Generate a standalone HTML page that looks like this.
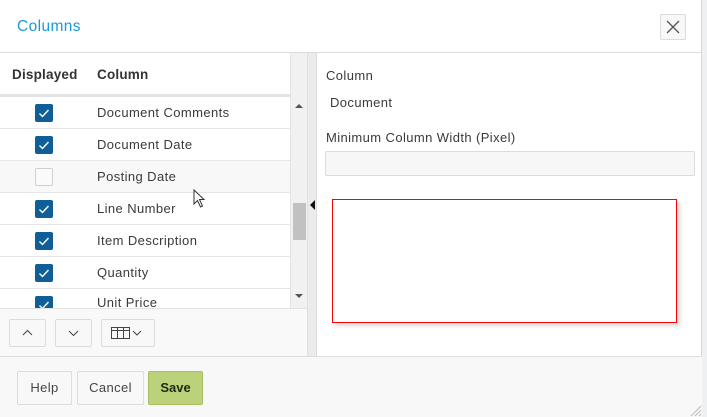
<!DOCTYPE html>
<html><head><style>
*{box-sizing:border-box;margin:0;padding:0}
body{width:707px;height:417px;overflow:hidden;background:#eef0f2;font-family:"Liberation Sans",sans-serif;font-size:13px;letter-spacing:0.4px;color:#3a3a3a;position:relative}
.dlg{position:absolute;left:0;top:0;width:702px;height:417px;background:#fff;border-right:1px solid #d8d8d8}
.hdr{position:absolute;left:0;top:0;width:702px;height:53px;border-bottom:1px solid #dcdcdc}
.title{position:absolute;left:17px;top:18px;font-size:15.5px;color:#1a9ad6}
.close{position:absolute;left:660px;top:14px;width:26px;height:26px;border:1px solid #dcdcdc;border-radius:2px;background:#f8f8f8}
.th{position:absolute;top:53px;left:0;width:290px;height:44px;border-bottom:3px solid #e4e4e4;font-weight:bold;font-size:13.5px;letter-spacing:0.2px;color:#333}
.row{position:absolute;left:0;width:290px;height:32px;border-bottom:1px solid #e6e6e6}
.cb{position:absolute;left:35px;top:7px;width:18px;height:18px;border-radius:2px;background:#0f5f96}
.cb.off{background:#fafafa;border:1px solid #cfcfcf}
.lbl{position:absolute;left:97px;top:8px;font-size:13px}
.sb{position:absolute;left:290px;top:53px;width:17px;height:255px;background:#f1f1f1;border-left:1px solid #e4e4e4}
.spl{position:absolute;left:307px;top:53px;width:10px;height:303px;background:#ebebeb;border-left:1px solid #e0e0e0;border-right:1px solid #dcdcdc}
.tb{position:absolute;left:0;top:308px;width:307px;height:48px;background:#f9f9f9;border-top:1px solid #e2e2e2}
.btn{position:absolute;border:1px solid #dcdcdc;border-radius:2px;background:#f8f8f8}
.ftr{position:absolute;left:0;top:356px;width:702px;height:61px;background:#f8f8f8;border-top:1px solid #dcdcdc}
</style></head><body>
<div class="dlg">
<div class="hdr"><div class="title">Columns</div>
<div class="close"><svg width="24" height="24"><path d="M6 6L18 18M18 6L6 18" stroke="#555" stroke-width="1.3"/></svg></div></div>
<div class="th"><span style="position:absolute;left:12px;top:14px">Displayed</span><span style="position:absolute;left:97px;top:14px">Column</span></div>
<div class="row" style="top:97px"><div class="cb"><svg width="18" height="18"><path d="M4.5 9.5L7.5 12.5L13.5 6" stroke="#fff" stroke-width="1.4" fill="none"/></svg></div><div class="lbl">Document Comments</div></div>
<div class="row" style="top:129px"><div class="cb"><svg width="18" height="18"><path d="M4.5 9.5L7.5 12.5L13.5 6" stroke="#fff" stroke-width="1.4" fill="none"/></svg></div><div class="lbl">Document Date</div></div>
<div class="row" style="top:161px;background:#f8f8f8"><div class="cb off"></div><div class="lbl">Posting Date</div></div>
<div class="row" style="top:193px"><div class="cb"><svg width="18" height="18"><path d="M4.5 9.5L7.5 12.5L13.5 6" stroke="#fff" stroke-width="1.4" fill="none"/></svg></div><div class="lbl">Line Number</div></div>
<div class="row" style="top:225px"><div class="cb"><svg width="18" height="18"><path d="M4.5 9.5L7.5 12.5L13.5 6" stroke="#fff" stroke-width="1.4" fill="none"/></svg></div><div class="lbl">Item Description</div></div>
<div class="row" style="top:257px"><div class="cb"><svg width="18" height="18"><path d="M4.5 9.5L7.5 12.5L13.5 6" stroke="#fff" stroke-width="1.4" fill="none"/></svg></div><div class="lbl">Quantity</div></div>
<div class="row" style="top:289px;height:19px;overflow:hidden;border:0"><div class="cb"><svg width="18" height="18"><path d="M4.5 9.5L7.5 12.5L13.5 6" stroke="#fff" stroke-width="1.4" fill="none"/></svg></div><div class="lbl" style="top:6px">Unit Price</div></div>
<svg style="position:absolute;left:193px;top:189px" width="14" height="20"><path d="M1 1L1 15L4.5 11.5L7.5 18L9.5 17L6.5 10.5L11 10.5Z" fill="#fff" stroke="#333" stroke-width="1"/></svg>
<div class="sb"><svg style="position:absolute;left:3px;top:50px" width="10" height="6"><path d="M1 5L5 1L9 5Z" fill="#555"/></svg>
<div style="position:absolute;left:2px;top:150px;width:13px;height:37px;background:#c1c1c1"></div>
<svg style="position:absolute;left:3px;top:240px" width="10" height="6"><path d="M1 1L5 5L9 1Z" fill="#555"/></svg></div>
<div class="spl"><svg style="position:absolute;left:2px;top:147px" width="6" height="10"><path d="M5 0L0 5L5 10Z" fill="#111"/></svg></div>
<div class="tb">
<div class="btn" style="left:9px;top:10px;width:37px;height:28px"><svg width="35" height="26"><path d="M13 15L17.5 10.5L22 15" stroke="#444" fill="none"/></svg></div>
<div class="btn" style="left:55px;top:10px;width:37px;height:28px"><svg width="35" height="26"><path d="M13 11L17.5 15.5L22 11" stroke="#444" fill="none"/></svg></div>
<div class="btn" style="left:101px;top:10px;width:54px;height:28px"><svg width="52" height="26"><rect x="9.5" y="7.5" width="18" height="11" fill="none" stroke="#444"/><path d="M9.5 10.5H27.5M15.5 7.5V18.5M21.5 7.5V18.5" stroke="#444"/><path d="M31 11L35 15L39 11" stroke="#444" fill="none"/></svg></div>
</div>
<div style="position:absolute;left:326px;top:68px">Column</div>
<div style="position:absolute;left:330px;top:95px">Document</div>
<div style="position:absolute;left:326px;top:130px">Minimum Column Width (Pixel)</div>
<div style="position:absolute;left:325px;top:151px;width:370px;height:25px;background:#f7f7f7;border:1px solid #dcdcdc;border-radius:2px"></div>
<div style="position:absolute;left:332px;top:199px;width:345px;height:124px;border:1px solid #f00;box-shadow:3px 3px 4px rgba(0,0,0,.15)"></div>
<div class="ftr">
<div class="btn" style="left:17px;top:14px;width:55px;height:34px;text-align:center;line-height:32px;color:#444">Help</div>
<div class="btn" style="left:77px;top:14px;width:67px;height:34px;text-align:center;line-height:32px;color:#444">Cancel</div>
<div class="btn" style="left:148px;top:14px;width:55px;height:34px;background:#bcd27a;border-color:#a9c061;text-align:center;line-height:32px;color:#1e2a10;font-weight:bold;letter-spacing:0">Save</div>
<svg style="position:absolute;left:690px;top:48px" width="12" height="12"><path d="M11 1L1 11M11 5L5 11M11 9L9 11" stroke="#bbb"/></svg>
</div>
</div>
</body></html>
